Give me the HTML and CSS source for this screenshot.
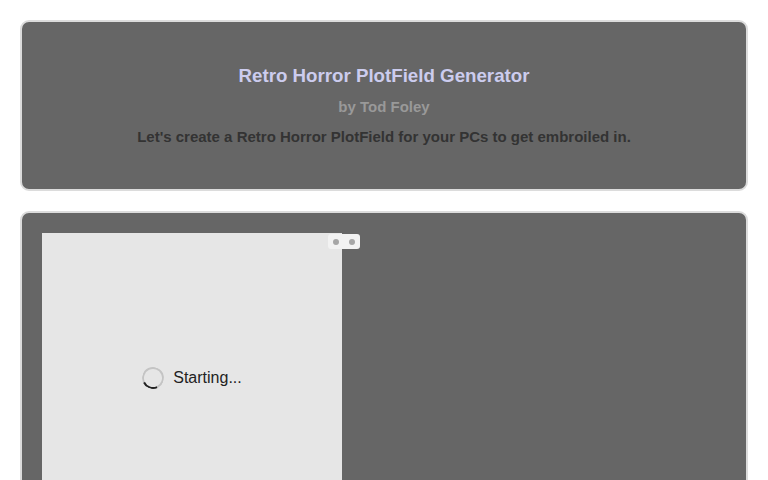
FILE: index.html
```html
<!DOCTYPE html>
<html lang="en">
<head>
<meta charset="utf-8">
<title>Retro Horror PlotField Generator</title>
<link rel="stylesheet" href="styles.css">
</head>
<body>
  <header class="card intro">
    <h1 class="title">Retro Horror PlotField Generator</h1>
    <p class="byline">by Tod Foley</p>
    <p class="lede">Let's create a Retro Horror PlotField for your PCs to get embroiled in.</p>
  </header>

  <section class="card stage">
    <div class="frame">
      <div class="loader">
        <span class="spinner"></span>
        <span class="loader-text">Starting...</span>
      </div>
      <div class="frame-controls">
        <span class="dot"></span>
        <span class="dot"></span>
      </div>
    </div>
  </section>
</body>
</html>
```
FILE: styles.css
```css
html, body {
  margin: 0;
  padding: 0;
  background: #ffffff;
}

body {
  padding: 20px;
  font-family: "Liberation Sans", Arial, sans-serif;
  display: flex;
  flex-direction: column;
  gap: 20px;
}

.card {
  background: #666666;
  border: 2px solid #dcdcdc;
  border-radius: 9px;
}

.intro {
  padding: 42px 20px 42px;
  text-align: center;
  display: flex;
  flex-direction: column;
}

.title {
  margin: 0;
  font-size: 18.72px;
  line-height: 24px;
  font-weight: bold;
  color: #ccccee;
}

.byline {
  margin: 9px 0 0;
  font-size: 15px;
  line-height: 20px;
  font-weight: bold;
  color: #999999;
}

.lede {
  margin: 10px 0 0;
  font-size: 15px;
  line-height: 20px;
  font-weight: bold;
  color: #333333;
}

.stage {
  padding: 20px;
  height: 400px;
}

.frame {
  position: relative;
  width: 300px;
  height: 400px;
  background: #e6e6e6;
  display: flex;
  justify-content: center;
  align-items: flex-start;
  padding-top: 133px;
  box-sizing: border-box;
}

.loader {
  display: flex;
  align-items: center;
  gap: 9px;
}

.spinner {
  width: 18px;
  height: 18px;
  border: 2px solid #c4c4c4;
  border-bottom-color: #222222;
  border-radius: 50%;
  transform: rotate(20deg);
}

.loader-text {
  font-size: 16px;
  line-height: 24px;
  color: #222222;
}

.frame-controls {
  position: absolute;
  top: 1px;
  right: -18px;
  width: 32px;
  height: 15px;
  background: #f2f2f2;
  border-radius: 3px;
  display: flex;
  align-items: center;
  justify-content: center;
  gap: 10px;
}

.dot {
  width: 6px;
  height: 6px;
  border-radius: 50%;
  background: #a6a6a6;
}
```
